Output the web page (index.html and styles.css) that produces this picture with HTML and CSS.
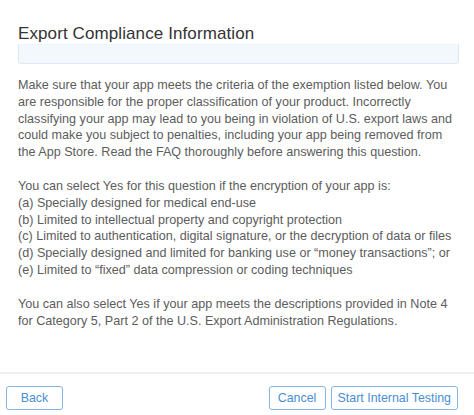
FILE: index.html
```html
<!DOCTYPE html>
<html lang="en">
<head>
<meta charset="utf-8">
<title>Export Compliance Information</title>
<link rel="stylesheet" href="styles.css">
</head>
<body>
<div class="modal">
  <header class="modal-head">
    <h2 class="modal-title">Export Compliance Information</h2>
  </header>
  <main class="modal-body">
    <div class="notice"></div>
    <p class="text">Make sure that your app meets the criteria of the exemption listed below. You are responsible for the proper classification of your product. Incorrectly classifying your app may lead to you being in violation of U.S. export laws and could make you subject to penalties, including your app being removed from the App Store. Read the FAQ thoroughly before answering this question.</p>
    <p class="text">You can select Yes for this question if the encryption of your app is:<br>
    (a) Specially designed for medical end-use<br>
    (b) Limited to intellectual property and copyright protection<br>
    (c) Limited to authentication, digital signature, or the decryption of data or files<br>
    (d) Specially designed and limited for banking use or “money transactions”; or<br>
    (e) Limited to “fixed” data compression or coding techniques</p>
    <p class="text">You can also select Yes if your app meets the descriptions provided in Note 4 for Category 5, Part 2 of the U.S. Export Administration Regulations.</p>
  </main>
  <footer class="modal-foot">
    <button class="btn">Back</button>
    <div class="foot-right">
      <button class="btn">Cancel</button>
      <button class="btn">Start Internal Testing</button>
    </div>
  </footer>
</div>
</body>
</html>
```

FILE: styles.css
```css
html, body {
  margin: 0;
  padding: 0;
  background: #ffffff;
}

body {
  font-family: "Liberation Sans", Arial, sans-serif;
  color: #5c5c5c;
}

.modal {
  width: 474px;
  height: 415px;
  display: flex;
  flex-direction: column;
  overflow: hidden;
}

.modal-head {
  flex-shrink: 0;
  padding: 24px 18px 0 18px;
}

.modal-title {
  margin: 0;
  font-size: 17px;
  line-height: 20px;
  font-weight: normal;
  color: #333333;
  letter-spacing: 0.1px;
}

.modal-body {
  flex: 1;
  min-height: 0;
  overflow: hidden;
  padding: 0 14px 0 18px;
}

.notice {
  height: 18px;
  border: 1px solid #dce7f3;
  border-top-color: #eef3f9;
  border-radius: 0 0 4px 4px;
  background: #f3f8fd;
  margin-right: 1px;
}

.text {
  margin: 13px 0 17px 0;
  font-size: 12.6px;
  line-height: 16.8px;
}

.modal-foot {
  flex-shrink: 0;
  border-top: 2px solid #eeeeee;
  padding: 12px 16px 5px 6px;
  display: flex;
  justify-content: space-between;
  align-items: center;
}

.foot-right {
  display: flex;
  gap: 5px;
}

.btn {
  height: 24px;
  padding: 0 6px;
  min-width: 57px;
  border: 1px solid #86b5e3;
  border-radius: 3px;
  background: #ffffff;
  color: #4a8ed6;
  font-family: "Liberation Sans", Arial, sans-serif;
  font-size: 12.4px;
  line-height: 22px;
}
```
